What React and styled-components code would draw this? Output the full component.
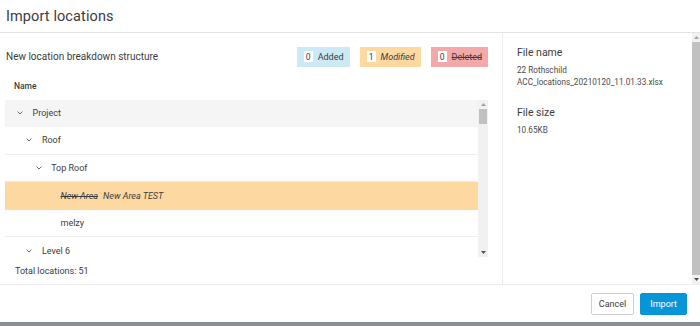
import React from 'react'
import styled, { createGlobalStyle } from 'styled-components'

const GlobalStyle = createGlobalStyle`
  html, body {
    margin: 0;
    padding: 0;
    background: #ffffff;
  }
  body {
    font-family: Roboto, "Noto Sans", sans-serif;
    color: #3c3c3c;
  }
`

const Page = styled.div`
  width: 700px;
  height: 326px;
  display: flex;
  flex-direction: column;
  overflow: hidden;
`

const Modal = styled.div`
  height: 322px;
  display: flex;
  flex-direction: column;
  background: #ffffff;
`

const Backdrop = styled.div`
  height: 4px;
  background: #8a8e93;
`

const Header = styled.div`
  height: 32px;
  display: flex;
  align-items: center;
  padding-left: 6px;
  border-bottom: 1px solid #e4e4e4;
`

const Title = styled.h1`
  margin: 0;
  font-size: 14.5px;
  font-weight: 400;
  color: #3c3c3c;
  letter-spacing: 0.1px;
`

const Body = styled.div`
  height: 251px;
  display: flex;
`

const LeftPanel = styled.div`
  width: 483px;
  padding: 0 14px 0 5px;
  border-right: 1px solid #ececec;
  display: flex;
  flex-direction: column;
`

const TitleRow = styled.div`
  margin-top: 13.5px;
  height: 20px;
  display: flex;
  align-items: center;
  gap: 10px;
`

const Subtitle = styled.div`
  flex: 1;
  padding-left: 1px;
  font-size: 10px;
`

const Badge = styled.div`
  height: 20px;
  display: flex;
  align-items: center;
  gap: 5px;
  padding: 0 6px 0 7px;
  background: ${p => p.$bg};
  font-size: 9px;
  color: #3c3c3c;
`

const Count = styled.span`
  width: 9px;
  height: 11px;
  background: #ffffff;
  display: flex;
  align-items: center;
  justify-content: center;
  font-size: 8.5px;
  font-style: normal;
  text-decoration: none;
`

const BadgeText = styled.span`
  font-style: ${p => (p.$italic ? 'italic' : 'normal')};
  text-decoration: ${p => (p.$strike ? 'line-through' : 'none')};
`

const ColumnHead = styled.div`
  margin-top: 5px;
  height: 28px;
  display: flex;
  align-items: center;
  padding-left: 9px;
  font-size: 8.5px;
  font-weight: 500;
`

const Tree = styled.div`
  height: 157px;
  display: flex;
`

const Rows = styled.div`
  flex: 1;
  overflow: hidden;
`

const Row = styled.div`
  height: 27.6px;
  box-sizing: border-box;
  display: flex;
  align-items: center;
  padding-left: ${p => 12 + p.$level * 9.3}px;
  background: ${p => p.$bg || '#ffffff'};
  border-bottom: 1px solid ${p => p.$bg ? p.$bg : '#eeeeee'};
  font-size: 9px;
`

const Toggle = styled.span`
  width: 15.6px;
  flex: none;
  display: flex;
  align-items: center;
`

const OldName = styled.span`
  font-style: italic;
  text-decoration: line-through;
  margin-right: 5px;
`

const NewName = styled.span`
  font-style: italic;
`

const ScrollTrack = styled.div`
  width: ${p => p.$w}px;
  flex: none;
  background: #f1f1f1;
  display: flex;
  flex-direction: column;
  align-items: center;
`

const ScrollArrow = styled.div`
  height: ${p => p.$h}px;
  width: 100%;
  display: flex;
  align-items: center;
  justify-content: center;
  flex: none;
`

const Thumb = styled.div`
  width: ${p => p.$w}px;
  height: ${p => p.$h}px;
  background: #c1c1c1;
  flex: none;
`

const Spacer = styled.div`
  flex: 1;
`

const Total = styled.div`
  margin-top: 8px;
  padding-left: 10px;
  font-size: 9px;
  line-height: 12px;
`

const RightPanel = styled.div`
  flex: 1;
  display: flex;
`

const Details = styled.div`
  flex: 1;
  padding: 13px 14px 0 14px;
`

const Label = styled.div`
  font-size: 10.5px;
  line-height: 14px;
  margin-bottom: 4px;
`

const Value = styled.div`
  font-size: 8.2px;
  line-height: 12px;
  color: #4a4a4a;
  margin-bottom: 18px;
`

const Footer = styled.div`
  flex: 1;
  border-top: 1px solid #ececec;
  display: flex;
  align-items: center;
  justify-content: flex-end;
  gap: 6px;
  padding-right: 13px;
`

const Button = styled.button`
  height: 22px;
  padding: 0 ${p => (p.$primary ? 9 : 7)}px;
  border-radius: 2px;
  border: 1px solid ${p => (p.$primary ? '#0696d7' : '#cfcfcf')};
  background: ${p => (p.$primary ? '#0696d7' : '#ffffff')};
  color: ${p => (p.$primary ? '#ffffff' : '#3c3c3c')};
  font-family: Roboto, "Noto Sans", sans-serif;
  font-size: 9px;
  cursor: pointer;
`

const Chevron = () => (
  <svg width='6' height='4' viewBox='0 0 6 4'>
    <polyline points='0.6,0.6 3,3 5.4,0.6' fill='none' stroke='#6a6a6a' strokeWidth='1' />
  </svg>
)

const ArrowUp = () => (
  <svg width='5' height='3' viewBox='0 0 5 3'>
    <polygon points='0,3 2.5,0 5,3' fill='#a3a3a3' />
  </svg>
)

const ArrowDown = () => (
  <svg width='5' height='3' viewBox='0 0 5 3'>
    <polygon points='0,0 5,0 2.5,3' fill='#505050' />
  </svg>
)

const rows = [
  { level: 0, name: 'Project', open: true, bg: '#f5f5f5' },
  { level: 1, name: 'Roof', open: true },
  { level: 2, name: 'Top Roof', open: true },
  { level: 3, old: 'New Area', name: 'New Area TEST', bg: '#fdd9a1' },
  { level: 3, name: 'melzy' },
  { level: 1, name: 'Level 6', open: true }
]

export default function App () {
  return (
    <Page>
      <GlobalStyle />
      <Modal>
        <Header>
          <Title>Import locations</Title>
        </Header>
        <Body>
          <LeftPanel>
            <TitleRow>
              <Subtitle>New location breakdown structure</Subtitle>
              <Badge $bg='#cde9f6'>
                <Count>0</Count>
                <BadgeText>Added</BadgeText>
              </Badge>
              <Badge $bg='#fdd9a1'>
                <Count>1</Count>
                <BadgeText $italic>Modified</BadgeText>
              </Badge>
              <Badge $bg='#f3a8aa'>
                <Count>0</Count>
                <BadgeText $strike>Deleted</BadgeText>
              </Badge>
            </TitleRow>
            <ColumnHead>Name</ColumnHead>
            <Tree>
              <Rows>
                {rows.map((r, i) => (
                  <Row key={i} $level={r.level} $bg={r.bg}>
                    <Toggle>{r.open ? <Chevron /> : null}</Toggle>
                    {r.old ? (
                      <span>
                        <OldName>{r.old}</OldName>
                        <NewName>{r.name}</NewName>
                      </span>
                    ) : (
                      <span>{r.name}</span>
                    )}
                  </Row>
                ))}
              </Rows>
              <ScrollTrack $w={10}>
                <ScrollArrow $h={9}><ArrowUp /></ScrollArrow>
                <Thumb $w={8} $h={15} />
                <Spacer />
                <ScrollArrow $h={9}><ArrowDown /></ScrollArrow>
              </ScrollTrack>
            </Tree>
            <Total>Total locations: 51</Total>
          </LeftPanel>
          <RightPanel>
            <Details>
              <Label>File name</Label>
              <Value>
                22 Rothschild<br />
                ACC_locations_20210120_11.01.33.xlsx
              </Value>
              <Label>File size</Label>
              <Value>10.65KB</Value>
            </Details>
            <ScrollTrack $w={8}>
              <ScrollArrow $h={9}><ArrowUp /></ScrollArrow>
              <Thumb $w={8} $h={233} />
              <Spacer />
              <ScrollArrow $h={9}><ArrowDown /></ScrollArrow>
            </ScrollTrack>
          </RightPanel>
        </Body>
        <Footer>
          <Button>Cancel</Button>
          <Button $primary>Import</Button>
        </Footer>
      </Modal>
      <Backdrop />
    </Page>
  )
}
